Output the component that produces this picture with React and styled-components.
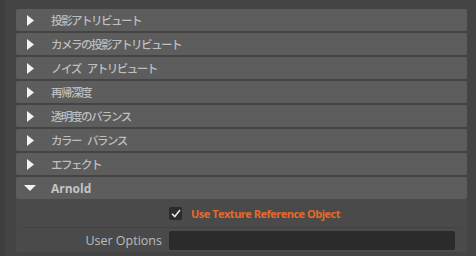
import React from "react"
import styled, { createGlobalStyle } from "styled-components"

const Global = createGlobalStyle`
  html, body {
    margin: 0;
    padding: 0;
    background: #444444;
  }
  body {
    width: 476px;
    height: 256px;
    overflow: hidden;
    font-family: "Noto Sans CJK JP", "Open Sans", sans-serif;
  }
`

const Editor = styled.div`
  display: flex;
  height: 256px;
  background: #444444;
`

const Gutter = styled.div`
  width: 5px;
  background: #3e3e3e;
  flex-shrink: 0;
`

const Sections = styled.div`
  display: flex;
  flex-direction: column;
  gap: 2px;
  padding: 9px 0 0 11px;
  width: 451px;
`

const Header = styled.div`
  display: flex;
  align-items: center;
  height: 22px;
  background: #5d5d5d;
  border-radius: 2px;
  white-space: pre;
  color: ${p => (p.latin ? "#c4c4c4" : "#bdbdbd")};
  font-size: ${p => (p.latin ? "12px" : "11.5px")};
  font-weight: ${p => (p.latin ? 700 : 500)};
  letter-spacing: ${p => (p.latin ? "0" : "-1.5px")};
  word-spacing: ${p => (p.latin ? "0" : "5px")};
  font-family: ${p =>
    p.latin
      ? `"Open Sans", "Liberation Sans", sans-serif`
      : `"Noto Sans CJK JP", sans-serif`};
`

const Arrow = styled.span`
  width: 35px;
  display: flex;
  padding-left: ${p => (p.open ? "8px" : "11px")};
  box-sizing: border-box;
  flex-shrink: 0;
  svg {
    display: block;
  }
`

const Body = styled.div`
  background: #4a4a4a;
  display: flex;
  flex-direction: column;
  margin-top: -2px;
  padding: 0 6px 0 5px;
`

const Row = styled.div`
  display: flex;
  align-items: center;
  height: ${p => p.h}px;
  border-bottom: 1px solid #434343;
  font-family: "Open Sans", "Liberation Sans", sans-serif;
  font-size: 12px;
`

const Label = styled.span`
  width: 141px;
  text-align: right;
  color: #bcbcbc;
  font-size: 12.5px;
  padding-right: 7px;
`

const Check = styled.span`
  width: 13px;
  height: 13px;
  background: #2b2b2b;
  border-radius: 2px;
  margin-left: 148px;
  margin-right: 9px;
  display: flex;
  align-items: center;
  justify-content: center;
`

const Orange = styled.span`
  color: #e46a2c;
  font-weight: 700;
  font-size: 11px;
  letter-spacing: -0.5px;
`

const Field = styled.div`
  width: 286px;
  height: 19px;
  background: #2b2b2b;
  border-radius: 2px;
`

const closed = [
  "投影アトリビュート",
  "カメラの投影アトリビュート",
  "ノイズ アトリビュート",
  "再帰深度",
  "透明度のバランス",
  "カラー バランス",
  "エフェクト",
]

const RightTri = () => (
  <svg width="7" height="11" viewBox="0 0 7 11">
    <path d="M0 0 L7 5.5 L0 11 Z" fill="#f2f2f2" />
  </svg>
)

const DownTri = () => (
  <svg width="12" height="6" viewBox="0 0 12 6">
    <path d="M0 0 L12 0 L6 6 Z" fill="#f2f2f2" />
  </svg>
)

export default function App() {
  return (
    <>
      <Global />
      <Editor>
        <Gutter />
        <Sections>
          {closed.map(t => (
            <Header key={t}>
              <Arrow>
                <RightTri />
              </Arrow>
              {t}
            </Header>
          ))}
          <Header latin>
            <Arrow open>
              <DownTri />
            </Arrow>
            Arnold
          </Header>
          <Body>
            <Row h={28}>
              <Check>
                <svg width="10" height="9" viewBox="0 0 10 9">
                  <path d="M1 4.8 L3.8 7.6 L9 1" stroke="#e8e8e8" strokeWidth="1.6" fill="none" />
                </svg>
              </Check>
              <Orange>Use Texture Reference Object</Orange>
            </Row>
            <Row h={24}>
              <Label>User Options</Label>
              <Field />
            </Row>
          </Body>
        </Sections>
      </Editor>
    </>
  )
}
